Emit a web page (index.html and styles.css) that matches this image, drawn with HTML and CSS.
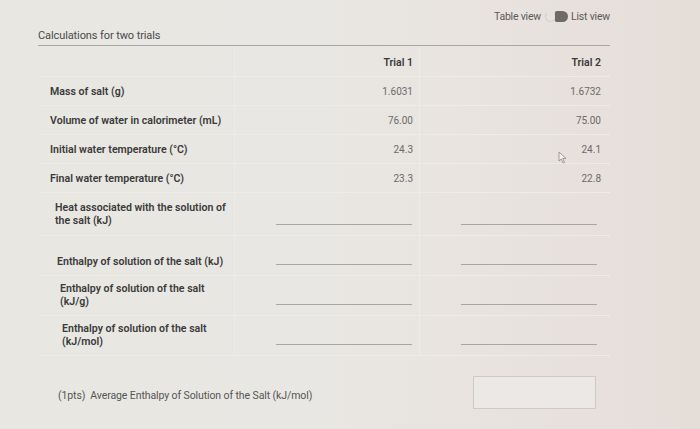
FILE: index.html
```html
<!DOCTYPE html>
<html>
<head>
<meta charset="utf-8">
<link rel="stylesheet" href="styles.css">
</head>
<body>
<div class="page">
  <div class="topbar">
    <span class="view-label">Table view</span>
    <span class="toggle"><span class="ring"></span><span class="knob"></span></span>
    <span class="view-label">List view</span>
  </div>
  <div class="section-title">Calculations for two trials</div>
  <div class="table">
    <div class="row head">
      <div class="cell label"></div>
      <div class="cell num strong">Trial 1</div>
      <div class="cell num strong t2">Trial 2</div>
    </div>
    <div class="row">
      <div class="cell label">Mass of salt (g)</div>
      <div class="cell num">1.6031</div>
      <div class="cell num t2">1.6732</div>
    </div>
    <div class="row">
      <div class="cell label">Volume of water in calorimeter (mL)</div>
      <div class="cell num">76.00</div>
      <div class="cell num t2">75.00</div>
    </div>
    <div class="row">
      <div class="cell label">Initial water temperature (°C)</div>
      <div class="cell num">24.3</div>
      <div class="cell num t2">24.1</div>
    </div>
    <div class="row">
      <div class="cell label">Final water temperature (°C)</div>
      <div class="cell num">23.3</div>
      <div class="cell num t2">22.8</div>
    </div>
    <div class="row calc first">
      <div class="cell label wrap">Heat associated with the solution of the salt (kJ)</div>
      <div class="cell input"><span class="line"></span></div>
      <div class="cell input t2"><span class="line"></span></div>
    </div>
    <div class="row calc">
      <div class="cell label wrap s1">Enthalpy of solution of the salt (kJ)</div>
      <div class="cell input"><span class="line"></span></div>
      <div class="cell input t2"><span class="line"></span></div>
    </div>
    <div class="row calc">
      <div class="cell label wrap s2">Enthalpy of solution of the salt (kJ/g)</div>
      <div class="cell input"><span class="line"></span></div>
      <div class="cell input t2"><span class="line"></span></div>
    </div>
    <div class="row calc">
      <div class="cell label wrap s3">Enthalpy of solution of the salt (kJ/mol)</div>
      <div class="cell input"><span class="line"></span></div>
      <div class="cell input t2"><span class="line"></span></div>
    </div>
  </div>
  <div class="average">
    <span class="avg-label">(1pts)&nbsp; Average Enthalpy of Solution of the Salt (kJ/mol)</span>
    <span class="avg-box"></span>
  </div>
  <svg class="cursor" width="9" height="13" viewBox="0 0 9 13"><path d="M1 1 L1 10 L3.3 8 L5 12 L6.5 11.3 L4.8 7.5 L8 7.5 Z" fill="#f4f2ef" stroke="#8a8785" stroke-width="0.8"/></svg>
</div>
</body>
</html>
```

FILE: styles.css
```css
* { box-sizing: border-box; }
html, body { margin: 0; padding: 0; }
body {
  font-family: Roboto, "Liberation Sans", sans-serif;
  color: #333;
}
.page {
  position: relative;
  width: 700px;
  height: 429px;
  overflow: hidden;
  background: linear-gradient(90deg, #e8e7e2 0%, #e9e7e3 45%, #e8e2de 75%, #e5ddd8 100%);
}
.topbar {
  display: flex;
  align-items: center;
  justify-content: flex-end;
  gap: 2px;
  height: 25px;
  padding: 8px 90px 0 0;
}
.view-label {
  font-size: 10.5px;
  color: #5a5a5a;
  letter-spacing: -0.2px;
}
.toggle {
  position: relative;
  display: inline-block;
  width: 24px;
  height: 11px;
  margin: 0 1px;
}
.ring {
  position: absolute;
  left: 1px;
  top: 0;
  width: 11px;
  height: 11px;
  border-radius: 50%;
  border: 1px solid #d3d0cc;
  border-top-color: transparent;
}
.knob {
  position: absolute;
  right: 0;
  top: 0;
  width: 13px;
  height: 11px;
  border-radius: 2px 6px 6px 2px;
  background: #6d6b69;
}
.section-title {
  margin: 4px 0 0 38px;
  width: 572px;
  font-size: 11px;
  color: #4a4a4a;
  padding-bottom: 3px;
  border-bottom: 1px solid #a9a7a3;
  letter-spacing: -0.1px;
}
.table {
  margin: 2px 0 0 40px;
  width: 570px;
}
.row {
  display: grid;
  grid-template-columns: 195px 185px 190px;
  height: 29px;
}
.cell {
  display: flex;
  align-items: center;
  border-right: 1px solid #eeece9;
  border-bottom: 1px solid #eeece9;
  font-size: 10px;
}
.cell.t2 { border-right: none; }
.label {
  padding-left: 10px;
  font-size: 10.6px;
  font-weight: 600;
  color: #3a3a3a;
}
.num {
  justify-content: flex-end;
  padding-right: 6px;
  color: #6a6a6a;
}
.num.t2 { padding-right: 9px; }
.strong {
  font-weight: 600;
  font-size: 10.5px;
  color: #3a3a3a;
}
.row.calc {
  height: 40px;
  align-items: stretch;
}
.row.calc.first { height: 43px; }
.wrap {
  align-items: flex-end;
  padding-bottom: 8px;
  padding-right: 6px;
  line-height: 13px;
  padding-left: 15px;
}
.s1 { padding-left: 17px; padding-bottom: 7px; }
.s2 { padding-left: 20px; padding-bottom: 7px; padding-right: 16px; }
.s3 { padding-left: 22px; padding-bottom: 7px; padding-right: 16px; }
.input {
  align-items: flex-end;
  justify-content: flex-end;
  padding: 0 7px 10px 0;
}
.input.t2 { padding-right: 13px; }
.line {
  display: block;
  width: 136px;
  height: 1px;
  background: #a8a6a3;
}
.average {
  display: flex;
  align-items: flex-start;
  justify-content: space-between;
  margin: 20px 0 0 58px;
  width: 538px;
}
.avg-label {
  margin-top: 13px;
  font-size: 10.5px;
  color: #555;
  letter-spacing: -0.1px;
}
.avg-box {
  display: block;
  width: 123px;
  height: 33px;
  border: 1px solid #cdcbc8;
  background: #ebe8e5;
}
.cursor {
  position: absolute;
  left: 558px;
  top: 151px;
}
```
